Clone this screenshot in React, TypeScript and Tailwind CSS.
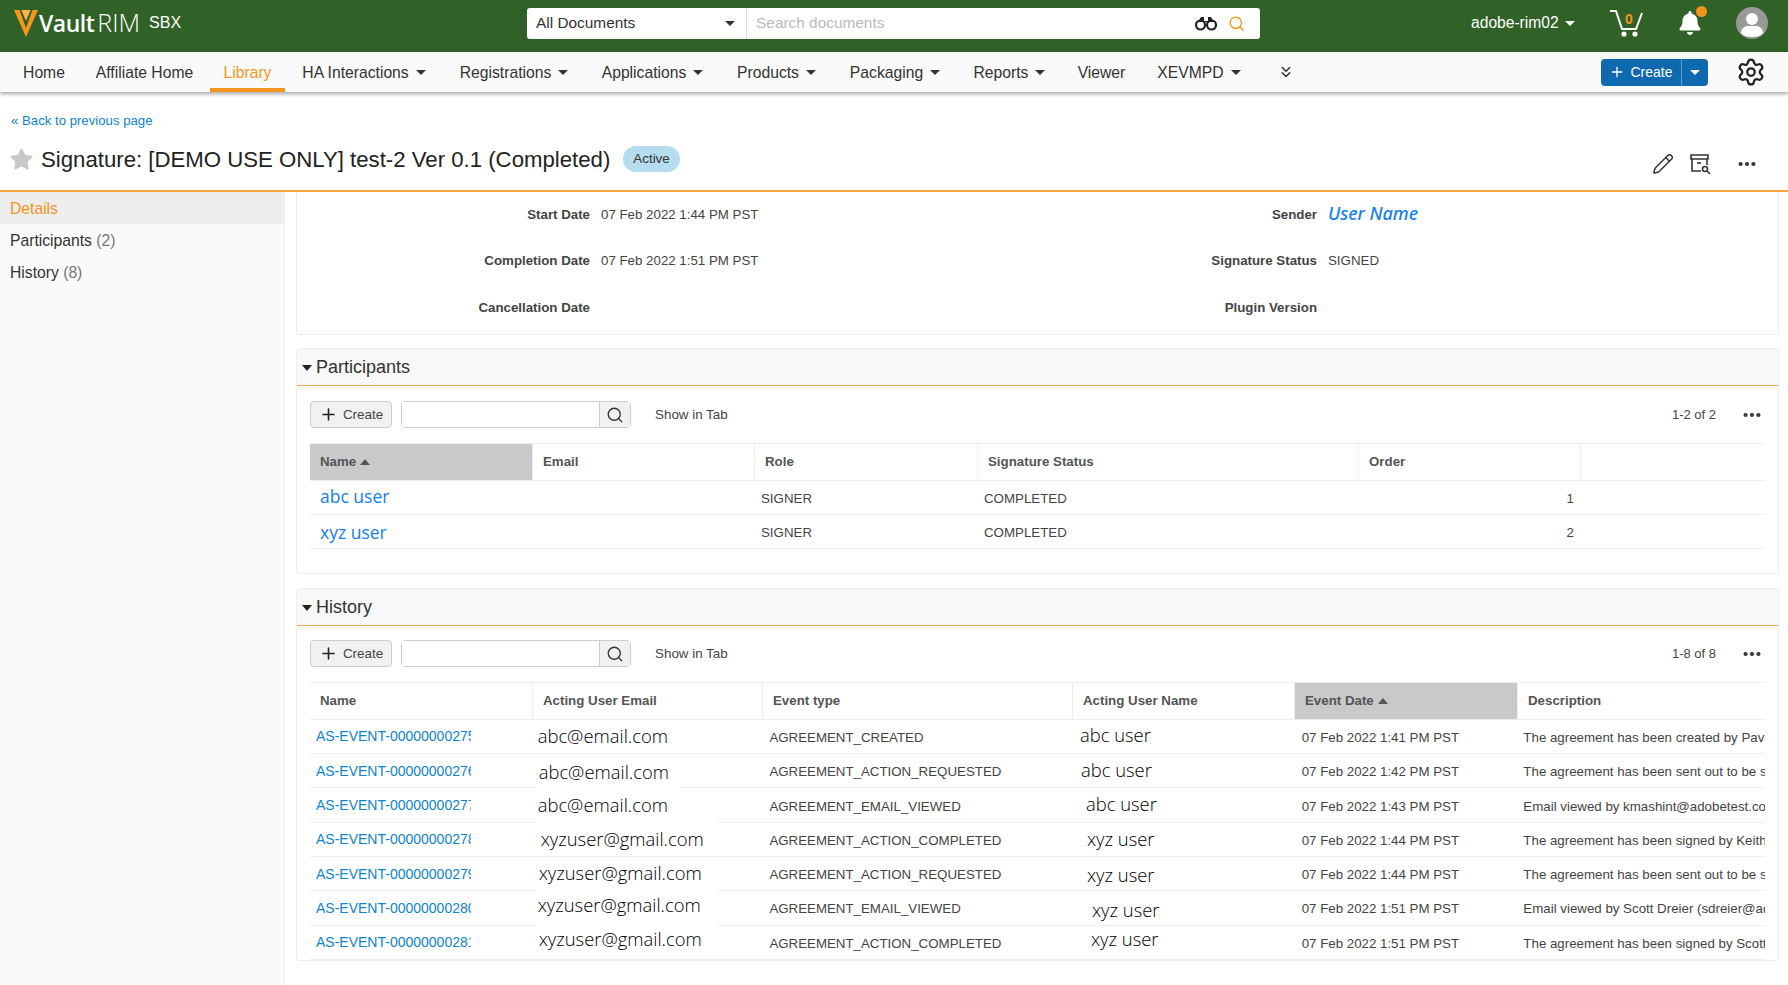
import { ChevronsDown, Ellipsis, Pencil, Plus, Search, Settings, Star } from 'lucide-react'
import { FaBell } from 'react-icons/fa'

const navItems = [
  { label: 'Home', width: 'w-[86px]' },
  { label: 'Affiliate Home', width: 'w-[123px] pr-[8px]' },
  { label: 'Library', width: 'w-[75px]', active: true },
  { label: 'HA Interactions', width: 'w-[158px]', caret: true },
  { label: 'Registrations', width: 'w-[142px]', caret: true },
  { label: 'Applications', width: 'w-[135px]', caret: true },
  { label: 'Products', width: 'w-[113px]', caret: true },
  { label: 'Packaging', width: 'w-[124px]', caret: true },
  { label: 'Reports', width: 'w-[105px]', caret: true },
  { label: 'Viewer', width: 'w-[79px]' },
  { label: 'XEVMPD', width: 'w-[116px]', caret: true },
]

const events = [
  { id: 'AS-EVENT-00000000275', email: 'abc@email.com', emailClass: '-translate-y-[2px]', type: 'AGREEMENT_CREATED', user: 'abc user', userClass: '-translate-y-[3px]', date: '07 Feb 2022 1:41 PM PST', text: 'The agreement has been created by Pavan Kumar' },
  { id: 'AS-EVENT-00000000276', email: 'abc@email.com', emailClass: 'ml-[1px]', type: 'AGREEMENT_ACTION_REQUESTED', user: 'abc user', userClass: 'ml-[1px] -translate-y-[2px]', date: '07 Feb 2022 1:42 PM PST', text: 'The agreement has been sent out to be signed', patch: 'w-[144px]' },
  { id: 'AS-EVENT-00000000277', email: 'abc@email.com', emailClass: '-translate-y-[2px]', type: 'AGREEMENT_EMAIL_VIEWED', user: 'abc user', userClass: 'ml-[6px] -translate-y-[3px]', date: '07 Feb 2022 1:43 PM PST', text: 'Email viewed by kmashint@adobetest.com', patch: 'w-[182px]' },
  { id: 'AS-EVENT-00000000278', email: 'xyzuser@gmail.com', emailClass: 'ml-[3px] -translate-y-[2px]', type: 'AGREEMENT_ACTION_COMPLETED', user: 'xyz user', userClass: 'ml-[7px] -translate-y-[2px]', date: '07 Feb 2022 1:44 PM PST', text: 'The agreement has been signed by Keith Mashint' },
  { id: 'AS-EVENT-00000000279', email: 'xyzuser@gmail.com', emailClass: 'ml-[1px] -translate-y-[2px]', type: 'AGREEMENT_ACTION_REQUESTED', user: 'xyz user', userClass: 'ml-[7px]', date: '07 Feb 2022 1:44 PM PST', text: 'The agreement has been sent out to be signed', patch: 'w-[182px]' },
  { id: 'AS-EVENT-00000000280', email: 'xyzuser@gmail.com', emailClass: '-translate-y-[5px]', type: 'AGREEMENT_EMAIL_VIEWED', user: 'xyz user', userClass: 'ml-[12px]', date: '07 Feb 2022 1:51 PM PST', text: 'Email viewed by Scott Dreier (sdreier@adobetest.com)', patch: 'w-[182px]' },
  { id: 'AS-EVENT-00000000281', email: 'xyzuser@gmail.com', emailClass: 'ml-[1px] -translate-y-[5px]', type: 'AGREEMENT_ACTION_COMPLETED', user: 'xyz user', userClass: 'ml-[11px] -translate-y-[5px]', date: '07 Feb 2022 1:51 PM PST', text: 'The agreement has been signed by Scott Dreier' },
]

function Caret({ className = 'border-t-[#333]' }: { className?: string }) {
  return <span className={`inline-block h-0 w-0 border-x-[5px] border-t-[5px] border-x-transparent ${className}`} />
}

function SortUp() {
  return <span className="ml-1 inline-block h-0 w-0 border-x-[5.5px] border-b-[6px] border-x-transparent border-b-[#555]" />
}

function Logo() {
  return (
    <svg width="24" height="28" viewBox="0 0 26 28" className="shrink-0" preserveAspectRatio="none">
      <path d="M0 1h6l7 18 7-18h6L13 28z" fill="#f7941d" />
      <path d="M8 1h10l-5 11z" fill="#f9b04e" />
    </svg>
  )
}

function BinocularIcon() {
  return (
    <svg width="24" height="16" viewBox="0 0 24 16" fill="none" className="ml-auto">
      <path d="M4 7l3-5h3v4h4V2h3l3 5" fill="#222" />
      <circle cx="6.5" cy="10" r="4.5" stroke="#222" strokeWidth="2.2" />
      <circle cx="17.5" cy="10" r="4.5" stroke="#222" strokeWidth="2.2" />
    </svg>
  )
}

function Cart() {
  return (
    <svg width="36" height="30" viewBox="0 0 36 30" fill="none" stroke="#fff" strokeWidth="2">
      <path d="M1 3h6l6 18h14l6-16" />
      <circle cx="15" cy="26" r="1.6" fill="#fff" />
      <circle cx="26" cy="26" r="1.6" fill="#fff" />
      <text x="20" y="16" textAnchor="middle" fontSize="14" fontWeight="700" fill="#f7941d" stroke="none" fontFamily="Liberation Sans">0</text>
    </svg>
  )
}

function Avatar() {
  return (
    <svg width="32" height="32" viewBox="0 0 32 32">
      <circle cx="16" cy="16" r="16" fill="#999" />
      <circle cx="16" cy="12" r="6" fill="#fff" />
      <path d="M5 26c0-5 4-7 7-7h8c3 0 7 2 7 7-3 3-6 4-11 4s-8-1-11-4z" fill="#fff" />
    </svg>
  )
}

function ArchiveSearch() {
  return (
    <svg width="22" height="22" viewBox="0 0 22 22" fill="none" stroke="#333" strokeWidth="1.6">
      <path d="M2 2h17v4H2z" />
      <path d="M3 6v12h9M18 6v6" />
      <path d="M8 10h4" />
      <circle cx="16" cy="16" r="2.5" />
      <path d="M18 18l3 3" />
    </svg>
  )
}

function Toolbar({ count }: { count: string }) {
  return (
    <div className="flex h-[28px] items-center pl-[13px] pr-[15px]">
      <button className="flex h-[27px] w-[82px] items-center justify-center gap-[5px] rounded-[4px] border border-[#ccc] bg-[#f1f1f1] text-[13.4px] text-[#444]">
        <Plus size={19} strokeWidth={2} className="text-[#222]" />
        Create
      </button>
      <div className="ml-[9px] flex h-[27px] w-[230px] rounded-[4px] border border-[#ccc]">
        <div className="flex-1 bg-white" />
        <div className="flex w-[31px] items-center justify-center border-l border-[#ccc] bg-[#f1f1f1]">
          <Search size={18} strokeWidth={1.8} className="text-[#333]" />
        </div>
      </div>
      <span className="ml-[24px] text-[13.4px] text-[#444]">Show in Tab</span>
      <span className="ml-auto text-[13px] text-[#444]">{count}</span>
      <Ellipsis size={22} strokeWidth={2.6} className="ml-[25px] text-[#333]" />
    </div>
  )
}

function HeaderCell({ label, sorted, width }: { label: string; sorted?: boolean; width: string }) {
  return (
    <div className={`flex h-[36px] shrink-0 items-center border-r border-[#eee] pl-[10px] text-[13.3px] font-bold text-[#555] ${width} ${sorted ? 'bg-[#c9c9c9]' : ''}`}>
      {label}
      {sorted && <SortUp />}
    </div>
  )
}

function DetailRow({ a, b, c, d }: { a: string; b: string; c: string; d?: React.ReactNode }) {
  return (
    <div className="flex h-[46.4px] items-center text-[13.3px]">
      <div className="w-[293px] text-right font-bold text-[#444]">{a}</div>
      <div className="w-[450px] pl-[11px] text-[#444]">{b}</div>
      <div className="w-[277px] text-right font-bold text-[#444]">{c}</div>
      <div className="pl-[11px] text-[#444]">{d}</div>
    </div>
  )
}

function Section({ title, children }: { title: string; children: React.ReactNode }) {
  return (
    <div className="rounded-[3px] border border-[#eee]">
      <div className="flex h-[37px] items-center border-b border-[#f5ab50] bg-[#f8f8f8] pl-[5px] pt-[2px] text-[18px] text-[#333]">
        <Caret className="mr-[4px] border-x-[5.5px] border-t-[6px] border-t-[#222]" />
        {title}
      </div>
      {children}
    </div>
  )
}

export default function App() {
  return (
    <div className="h-[985px] w-[1788px] overflow-hidden bg-white font-['Liberation_Sans',sans-serif]">
      <div className="flex h-[52px] items-center bg-[#306227] pb-[6px] pl-[14px] text-white">
        <Logo />
        <span className="ml-[1px] text-[23px] font-semibold tracking-[-0.5px] font-['Open_Sans',sans-serif]">Vault</span>
        <span className="ml-[3px] text-[25px] font-light font-['Open_Sans',sans-serif]">RIM</span>
        <span className="ml-[9px] text-[16px]">SBX</span>
        <div className="ml-[346px] flex h-[31px] w-[733px] items-center rounded-[3px] bg-white text-[15.4px]">
          <div className="flex h-full w-[220px] items-center justify-between border-r border-[#dcdce8] pl-[9px] pr-[11px] text-[#333]">
            All Documents
            <Caret />
          </div>
          <span className="pl-[9px] text-[#bbb]">Search documents</span>
          <BinocularIcon />
          <Search size={17} strokeWidth={2} className="ml-[10px] mr-[15px] text-[#f7941d]" />
        </div>
        <span className="ml-[211px] text-[15.6px]">adobe-rim02</span>
        <Caret className="ml-[6px] border-t-white" />
        <div className="ml-[34px]"><Cart /></div>
        <div className="relative ml-[33px]">
          <FaBell size={24} />
          <span className="absolute right-[-5px] top-[-5px] h-[11px] w-[11px] rounded-full bg-[#f7941d]" />
        </div>
        <div className="ml-[34px]"><Avatar /></div>
      </div>

      <div className="relative z-10 flex h-[40px] items-center bg-[#fafafa] pl-[1px] shadow-[0_2px_4px_rgba(0,0,0,0.35)]">
        {navItems.map((item) => (
          <div
            key={item.label}
            className={`flex h-full shrink-0 items-center justify-center gap-[7px] whitespace-nowrap border-b-[4px] pt-[5px] text-[15.7px] ${item.width} ${item.active ? 'border-[#f7941d] text-[#f7941d]' : 'border-transparent text-[#333]'}`}
          >
            {item.label}
            {item.caret && <Caret />}
          </div>
        ))}
        <ChevronsDown size={18} strokeWidth={2} className="ml-[20px] text-[#333]" />
        <div className="ml-auto flex h-[27px] w-[107px] rounded-[4px] bg-[#0f69ae] text-[14px] text-white">
          <div className="flex flex-1 items-center justify-center gap-[5px] border-r border-[#5b9bd0]">
            <Plus size={16} strokeWidth={2} />
            Create
          </div>
          <div className="flex w-[26px] items-center justify-center">
            <Caret className="border-t-white" />
          </div>
        </div>
        <Settings size={30} strokeWidth={1.8} className="ml-[28px] mr-[22px] text-[#222]" />
      </div>

      <div className="px-[11px] pt-[19px] text-[13.2px] text-[#0f84c8]">« Back to previous page</div>

      <div className="flex h-[61px] items-center border-b-2 border-[#f7a23b] pb-[2px] pl-[9px] pr-[30px]">
        <Star size={25} fill="#c8c8c8" strokeWidth={1} className="text-[#c8c8c8]" />
        <h1 className="ml-[7px] text-[22.2px] text-[#222]">Signature: [DEMO USE ONLY] test-2 Ver 0.1 (Completed)</h1>
        <span className="ml-[13px] rounded-full bg-[#b5dcef] px-[10px] py-[3px] text-[13.4px] text-[#333]">Active</span>
        <Pencil size={22} strokeWidth={1.6} className="ml-auto mt-[9px] text-[#333]" />
        <div className="ml-[15px] mt-[9px]"><ArchiveSearch /></div>
        <Ellipsis size={22} strokeWidth={2.6} className="ml-[25px] mt-[9px] text-[#333]" />
      </div>

      <div className="flex">
        <aside className="h-[793px] w-[285px] shrink-0 border-r border-[#eee] bg-[#fafafa] text-[15.7px] text-[#333]">
          <div className="flex h-[32px] items-center bg-[#eee] pl-[10px] pt-[1px] text-[#f7941d]">Details</div>
          <div className="flex h-[32px] items-center pl-[10px] pt-[1px]">Participants&nbsp;<span className="text-[#777]">(2)</span></div>
          <div className="flex h-[32px] items-center pl-[10px] pt-[1px]">History&nbsp;<span className="text-[#777]">(8)</span></div>
        </aside>

        <main className="ml-[11px] w-[1483px]">
          <div className="h-[143px] rounded-b-[3px] border border-t-0 border-[#eee]">
            <DetailRow a="Start Date" b="07 Feb 2022 1:44 PM PST" c="Sender" d={<span className="-mt-[3px] block text-[18px] font-medium italic text-[#1580ee] font-['Noto_Sans',sans-serif]">User Name</span>} />
            <DetailRow a="Completion Date" b="07 Feb 2022 1:51 PM PST" c="Signature Status" d="SIGNED" />
            <DetailRow a="Cancellation Date" b="" c="Plugin Version" />
          </div>

          <div className="mt-[13px]">
            <Section title="Participants">
              <div className="h-[187px] pt-[15px]">
                <Toolbar count="1-2 of 2" />
                <div className="ml-[13px] mr-[13px] mt-[14px]">
                  <div className="flex border-y border-[#eee]">
                    <HeaderCell label="Name" sorted width="w-[223px]" />
                    <HeaderCell label="Email" width="w-[222px]" />
                    <HeaderCell label="Role" width="w-[223px]" />
                    <HeaderCell label="Signature Status" width="w-[381px]" />
                    <HeaderCell label="Order" width="w-[222px]" />
                  </div>
                  {[
                    { name: 'abc user', order: 1, nameClass: '-translate-y-[3px]' },
                    { name: 'xyz user', order: 2, nameClass: '-translate-y-[1px]' },
                  ].map((row) => (
                    <div key={row.name} className="flex h-[34px] items-center border-b border-[#eee] pt-[3px] text-[13.3px] text-[#444]">
                      <div className={`w-[445px] pl-[10px] text-[17.5px] text-[#1580ee] font-['Open_Sans',sans-serif] ${row.nameClass}`}>{row.name}</div>
                      <div className="w-[223px] pl-[6px]">SIGNER</div>
                      <div className="w-[381px] pl-[6px]">COMPLETED</div>
                      <div className="w-[215px] text-right">{row.order}</div>
                    </div>
                  ))}
                </div>
              </div>
            </Section>
          </div>

          <div className="mt-[14px]">
            <Section title="History">
              <div className="pt-[14px]">
                <Toolbar count="1-8 of 8" />
                <div className="ml-[13px] mr-[13px] mt-[14px] overflow-hidden">
                  <div className="flex border-y border-[#eee]">
                    <HeaderCell label="Name" width="w-[223px]" />
                    <HeaderCell label="Acting User Email" width="w-[230px]" />
                    <HeaderCell label="Event type" width="w-[310px]" />
                    <HeaderCell label="Acting User Name" width="w-[222px]" />
                    <HeaderCell label="Event Date" sorted width="w-[223px]" />
                    <HeaderCell label="Description" width="w-[250px]" />
                  </div>
                  {events.map((row) => (
                    <div key={row.id} className="relative flex h-[34.3px] items-center border-b border-[#eee] pt-[3px] text-[13.3px] text-[#444]">
                      {row.patch && <span className={`absolute bottom-[-1px] left-[226px] h-[2px] bg-white ${row.patch}`} />}
                      <div className="w-[223px] pl-[6px]">
                        <div className="w-[155px] -translate-y-[1px] overflow-hidden whitespace-nowrap text-[14px] text-[#0f84c8]">{row.id}</div>
                      </div>
                      <div className="w-[230px] pl-[5px] text-[18.4px] font-light text-black font-['Open_Sans',sans-serif]">
                        <div className={row.emailClass}>{row.email}</div>
                      </div>
                      <div className="w-[310px] pl-[7px]">{row.type}</div>
                      <div className="w-[222px] pl-[8px] text-[18.4px] font-light text-black font-['Open_Sans',sans-serif]">
                        <div className={row.userClass}>{row.user}</div>
                      </div>
                      <div className="w-[223px] pl-[8px]">{row.date}</div>
                      <div className="w-[249px] overflow-hidden whitespace-nowrap pl-[7px]">{row.text}</div>
                    </div>
                  ))}
                </div>
              </div>
            </Section>
          </div>
        </main>
      </div>
    </div>
  )
}
